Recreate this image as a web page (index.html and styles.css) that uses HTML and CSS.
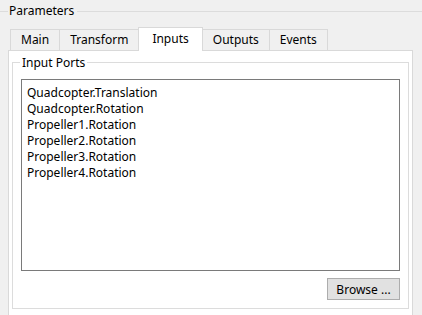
FILE: index.html
```html
<!DOCTYPE html>
<html>
<head>
<meta charset="utf-8">
<link rel="stylesheet" href="styles.css">
</head>
<body>
<div class="params">
  <div class="params-title"><span>Parameters</span></div>
  <div class="tabs">
    <div class="tab">Main</div>
    <div class="tab">Transform</div>
    <div class="tab tab-active">Inputs</div>
    <div class="tab">Outputs</div>
    <div class="tab">Events</div>
  </div>
  <div class="pane">
    <fieldset class="group">
      <legend>Input Ports</legend>
      <ul class="list">
        <li>Quadcopter.Translation</li>
        <li>Quadcopter.Rotation</li>
        <li>Propeller1.Rotation</li>
        <li>Propeller2.Rotation</li>
        <li>Propeller3.Rotation</li>
        <li>Propeller4.Rotation</li>
      </ul>
      <div class="actions">
        <button class="btn">Browse ...</button>
      </div>
    </fieldset>
  </div>
</div>
</body>
</html>
```

FILE: styles.css
```css
*, *::before, *::after {
  box-sizing: border-box;
}
html, body {
  margin: 0;
  padding: 0;
  background: #f0f0f0;
  overflow: hidden;
  width: 422px;
  height: 315px;
}
body {
  font-family: "Noto Sans", "Open Sans", sans-serif;
  font-size: 12px;
  color: #000;
}
.params-title {
  display: flex;
  align-items: center;
  height: 22px;
  line-height: 22px;
}
.params-title::before {
  content: "";
  width: 8px;
  height: 1px;
  background: #dcdcdc;
  margin-right: 1px;
}
.params-title::after {
  content: "";
  flex: 1;
  height: 1px;
  background: #dcdcdc;
  margin-left: 3px;
}
.tabs {
  display: flex;
  align-items: flex-end;
  margin: 5px 0 0 10px;
  height: 23px;
  position: relative;
  z-index: 1;
}
.tab {
  height: 21px;
  line-height: 20px;
  padding: 0 10px;
  border: 1px solid #d9d9d9;
  border-bottom: none;
  background: #f0f0f0;
  margin-left: -1px;
}
.tab:first-child {
  margin-left: 0;
}
.tab-active {
  height: 24px;
  line-height: 22px;
  margin-bottom: -1px;
  background: #fff;
  padding: 0 13px;
}
.pane {
  margin-left: 8px;
  width: 405px;
  height: 266px;
  border: 1px solid #d9d9d9;
  background: #fff;
  padding: 4px 3px 0 3px;
}
.group {
  margin: 0;
  min-width: 0;
  border: 1px solid #dcdcdc;
  padding: 9px 8px 8px 8px;
}
.group legend {
  padding: 0 2px;
  margin-left: -1px;
  line-height: 15px;
}
.list {
  list-style: none;
  margin: 0;
  height: 192px;
  border: 1px solid #7a7a7a;
  padding: 5px;
  line-height: 16px;
}
.actions {
  display: flex;
  justify-content: flex-end;
  margin-top: 7px;
}
.btn {
  font: inherit;
  width: 73px;
  height: 22px;
  background: #e1e1e1;
  border: 1px solid #adadad;
  color: #000;
  padding: 0;
  border-radius: 0;
}
```
